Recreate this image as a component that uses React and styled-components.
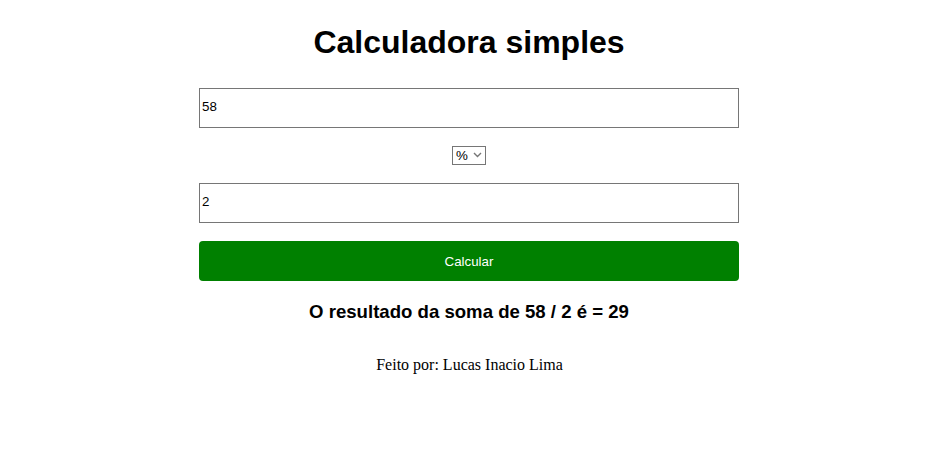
import React, { useState } from 'react'
import styled, { createGlobalStyle } from 'styled-components'

const GlobalStyle = createGlobalStyle`
body {
  margin: 0;
  background: #fff;
  font-family: "Liberation Sans", Arial, sans-serif;
}
`

const Page = styled.main`
display: flex;
flex-direction: column;
align-items: center;
padding-top: 24px;
`

const Title = styled.h1`
margin: 0 0 27px -4px;
font-size: 32px;
font-weight: bold;
color: #000;
line-height: 37px;
`

const Form = styled.div`
width: 540px;
display: flex;
flex-direction: column;
align-items: center;
gap: 18px;
margin-left: -4px;
`

const NumberInput = styled.input`
box-sizing: border-box;
width: 100%;
height: 40px;
padding: 0 2px 3px;
border: 1px solid #767676;
font-family: "Liberation Sans", Arial, sans-serif;
font-size: 13.33px;
color: #000;
outline: none;
`

const SelectWrap = styled.span`
position: relative;
display: inline-block;
height: 19px;
`

const Operator = styled.select`
box-sizing: border-box;
appearance: none;
-webkit-appearance: none;
height: 19px;
width: 34px;
border: 1px solid #767676;
border-radius: 0;
background: #fff;
font-family: "Liberation Sans", Arial, sans-serif;
font-size: 13.33px;
line-height: 17px;
padding: 0 0 0 3px;
color: #000;
outline: none;
`

const Chevron = styled.svg`
position: absolute;
right: 4px;
top: 6px;
width: 9px;
height: 6px;
pointer-events: none;
`

const Button = styled.button`
width: 100%;
height: 40px;
border: none;
border-radius: 4px;
background: #008000;
color: #fff;
font-family: "Liberation Sans", Arial, sans-serif;
font-size: 13.33px;
font-weight: 500;
cursor: pointer;
`

const Result = styled.h2`
margin: 20px 0 0 -4px;
font-size: 18.6px;
line-height: 21px;
font-weight: bold;
color: #000;
`

const Footer = styled.p`
margin: 34px 0 0 -3px;
font-family: "Liberation Serif", "Times New Roman", serif;
font-size: 16px;
line-height: 18px;
color: #000;
`

const App = () => {
  const [a, setA] = useState('58')
  const [b, setB] = useState('2')
  const [op, setOp] = useState('%')

  return (
    <>
      <GlobalStyle />
      <Page>
        <Title>Calculadora simples</Title>
        <Form>
          <NumberInput value={a} onChange={e => setA(e.target.value)} />
          <SelectWrap>
            <Operator value={op} onChange={e => setOp(e.target.value)}>
              <option value="+">+</option>
              <option value="-">-</option>
              <option value="*">*</option>
              <option value="/">/</option>
              <option value="%">%</option>
            </Operator>
            <Chevron viewBox="0 0 9 6">
              <path d="M1 1l3.5 3.5L8 1" fill="none" stroke="#767676" strokeWidth="1.4" />
            </Chevron>
          </SelectWrap>
          <NumberInput value={b} onChange={e => setB(e.target.value)} />
          <Button>Calcular</Button>
        </Form>
        <Result>O resultado da soma de 58 / 2 é = 29</Result>
        <Footer>Feito por: Lucas Inacio Lima</Footer>
      </Page>
    </>
  )
}

export default App
